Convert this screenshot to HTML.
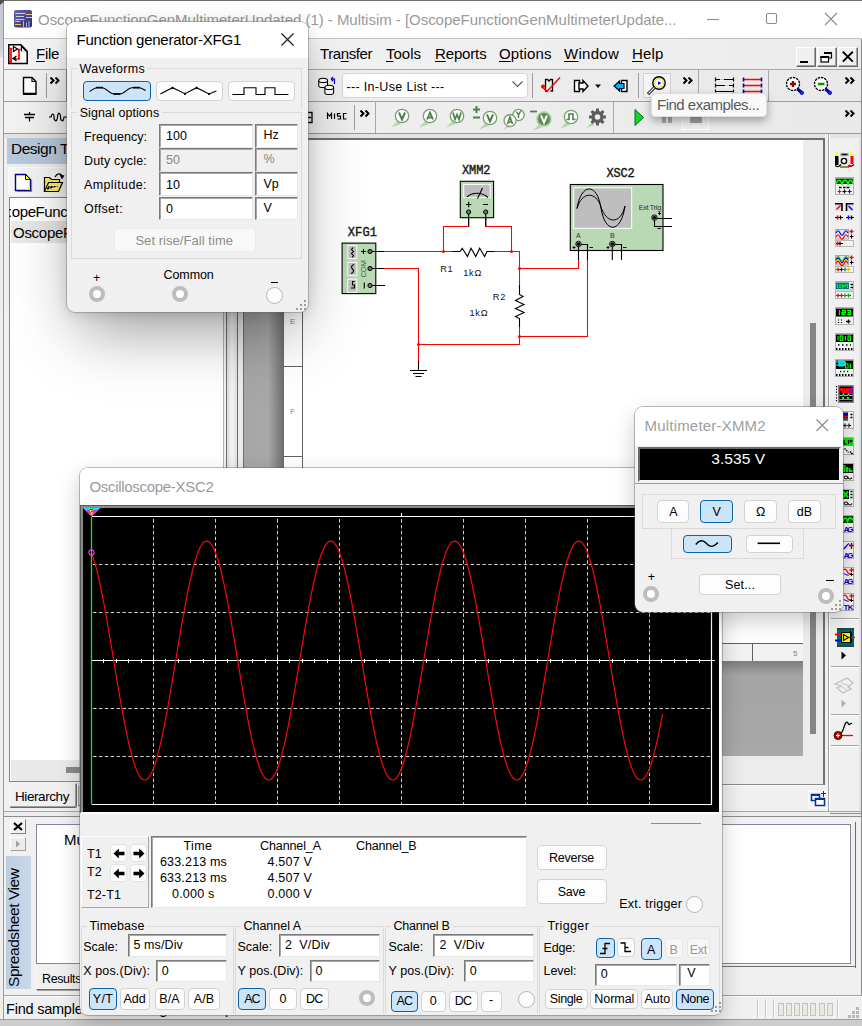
<!DOCTYPE html>
<html><head><meta charset="utf-8"><title>Multisim</title>
<style>
*{box-sizing:border-box;margin:0;padding:0}
html,body{width:862px;height:1026px;overflow:hidden;background:#f0f0f0}
body{font-family:"Liberation Sans",sans-serif;color:#000;position:relative}
.a{position:absolute}
.t{position:absolute;white-space:pre;line-height:1}
u{text-decoration:underline;text-underline-offset:1.5px;text-decoration-thickness:1px}
.sunk{position:absolute;background:#fff;border:1px solid;border-color:#7a7a7a #e8e8e8 #e8e8e8 #7a7a7a;box-shadow:inset 1px 1px 0 #a8a8a8}
.btn{position:absolute;background:#fdfdfd;border:1px solid #d2d2d2;border-radius:4px}
.btn.on{background:#cce4f7;border-color:#0a64ad}
.win{position:absolute;background:#f0f0f0;border-radius:8px;box-shadow:0 0 0 1px rgba(100,100,100,.38),0 30px 60px -12px rgba(0,0,0,.40),0 2px 14px rgba(0,0,0,.13)}
.wint{position:absolute;left:0;top:0;right:0;background:#fff;border-radius:8px 8px 0 0}
.grp{position:absolute;border:1px solid #dadada}
.win.ina{box-shadow:0 0 0 1px rgba(100,100,100,.42),0 8px 22px 0 rgba(0,0,0,.22)}

</style></head><body>
<div class="a" style="left:0px;top:0px;width:4px;height:1026px;background:#eeeeee;"></div>
<div class="a" style="left:0px;top:0px;width:4px;height:57px;background:linear-gradient(180deg,#c4c8d1 0,#c9cdd6 80%,#dcdfe4 100%);"></div>
<div class="a" style="left:3px;top:1px;width:1px;height:1025px;background:#9a9a9a;"></div>
<div class="a" style="left:0px;top:0px;width:862px;height:1px;background:#707070;"></div>
<svg class="a" style="left:0;top:0" width="5" height="6" viewBox="0 0 5 6"><path d="M0 0H4.500V1.200L0 5Z" fill="#505050"/></svg>
<div class="a" style="left:4px;top:1px;width:858px;height:37px;background:#fff;"></div>
<div class="a" style="left:4px;top:38px;width:858px;height:1px;background:#c4c4c4;"></div>
<svg class="a" style="left:13px;top:9px" width="20" height="20" viewBox="0 0 20 20"><defs><linearGradient id="ai" x1="0" y1="0" x2="1" y2="1"><stop offset="0" stop-color="#6a68a8"/><stop offset="1" stop-color="#2c2a70"/></linearGradient></defs><rect x="1" y="1" width="18" height="17.5" rx="2" fill="url(#ai)"/><g stroke="#cfcfe6" stroke-width="1"><path d="M2.5 4.5h10M3 7.5h8M2.5 10.5h9"/><path d="M10.5 18v-6M13.5 18v-4.5M16 18v-6" stroke="#b4b4d4"/></g><g stroke="#f0c860" stroke-width="1.2"><path d="M13 5.5h6M13 8.5h6M2 12.5h5M2 15.5h6"/></g></svg>
<div class="t" style="left:38.0px;top:12.0px;font-size:15px;letter-spacing:-0.03px;color:#9a9a9a;">OscopeFunctionGenMultimeterUpdated (1) - Multisim - [OscopeFunctionGenMultimeterUpdate...</div>
<svg class="a" style="left:700px;top:5px" width="150" height="28" viewBox="0 0 150 28"><g stroke="#8c8c8c" stroke-width="1.1" fill="none"><path d="M7 14.5h12"/><rect x="66.5" y="8.5" width="10" height="10" rx="1.5"/><path d="M125 8l12 12M137 8l-12 12"/></g></svg>
<div class="a" style="left:4px;top:39px;width:858px;height:30px;background:linear-gradient(90deg,#f4f4f4,#ececec);"></div>
<svg class="a" style="left:7px;top:43px" width="22" height="22" viewBox="0 0 22 22"><path d="M1.800 1.800h12l6.400 6.400V20.400H1.800z" fill="#fff" stroke="#000" stroke-width="1.500"/><path d="M13.800 1.800v6.400h6.400z" fill="#000"/><path d="M15 4.800l3.400 3.400H15z" fill="#fff"/><path d="M2.500 5.500h3M4 5.500v13M10.500 6.500h3M12 6.500v9.500H9" stroke="#f00" stroke-width="1.700" fill="none"/><rect x="2.500" y="17" width="2.500" height="3" fill="#f00"/><path d="M6.500 3.500l4 2.500-4 2.500z" fill="#fff" stroke="#000" stroke-width="1.200"/><path d="M9.500 13l-3.500 2.500 3.500 2.500M6 15.500h3" fill="none" stroke="#000" stroke-width="1.300"/></svg>
<div class="t" style="left:36.0px;top:46.4px;font-size:15px;letter-spacing:-0.29px;color:#000;"><u>F</u>ile</div>
<div class="t" style="left:320.0px;top:46.4px;font-size:15px;letter-spacing:-0.41px;color:#000;">Tra<u>n</u>sfer</div>
<div class="t" style="left:386.0px;top:46.4px;font-size:15px;letter-spacing:-0.00px;color:#000;"><u>T</u>ools</div>
<div class="t" style="left:435.0px;top:46.4px;font-size:15px;letter-spacing:-0.15px;color:#000;"><u>R</u>eports</div>
<div class="t" style="left:499.0px;top:46.4px;font-size:15px;letter-spacing:0.12px;color:#000;"><u>O</u>ptions</div>
<div class="t" style="left:564.0px;top:46.4px;font-size:15px;letter-spacing:0.27px;color:#000;"><u>W</u>indow</div>
<div class="t" style="left:632.0px;top:46.4px;font-size:15px;letter-spacing:0.16px;color:#000;"><u>H</u>elp</div>
<div class="a" style="left:796px;top:47px;width:20px;height:20px;background:#f0f0f0;border:1px solid;border-color:#fff #696969 #696969 #fff;box-shadow:inset -1px -1px 0 #a0a0a0"></div>
<div class="a" style="left:817px;top:47px;width:20px;height:20px;background:#f0f0f0;border:1px solid;border-color:#fff #696969 #696969 #fff;box-shadow:inset -1px -1px 0 #a0a0a0"></div>
<div class="a" style="left:838px;top:47px;width:20px;height:20px;background:#f0f0f0;border:1px solid;border-color:#fff #696969 #696969 #fff;box-shadow:inset -1px -1px 0 #a0a0a0"></div>
<svg class="a" style="left:796px;top:47px" width="62" height="20" viewBox="796 47 62 20"><g stroke="#000" fill="none"><path d="M800 62H808" stroke-width="2"/><path d="M824.500 53.500h7v4.500h-2.500" stroke-width="1.200"/><path d="M824 53h8" stroke-width="2"/><rect x="821" y="57" width="7.500" height="5" fill="#fff" stroke-width="1.200"/><path d="M820.400 57h8.700" stroke-width="2"/><path d="M842.800 51.800l10 9.800M852.800 51.800l-10 9.800" stroke-width="1.900"/></g></svg>
<div class="a" style="left:4px;top:69px;width:858px;height:1px;background:#a8a8a8;"></div>
<div class="a" style="left:4px;top:70px;width:858px;height:31px;background:linear-gradient(90deg,#f2f2f2,#e9e9e9);"></div>
<div class="a" style="left:4px;top:101px;width:858px;height:1px;background:#a0a0a0;"></div>
<div class="a" style="left:4px;top:102px;width:858px;height:31px;background:linear-gradient(90deg,#f2f2f2,#e9e9e9);"></div>
<div class="a" style="left:4px;top:133px;width:858px;height:1px;background:#9a9a9a;"></div>
<div class="a" style="left:4px;top:134px;width:858px;height:4px;background:#e4e4e4;"></div>
<div class="a" style="left:228px;top:138px;width:596px;height:2px;background:#707070;"></div>
<svg class="a" style="left:22px;top:76px" width="16" height="20" viewBox="0 0 16 20"><path d="M1.500 1.500h8.500l4 4V17.500H1.500z" fill="#fff" stroke="#000" stroke-width="1.4"/><path d="M1 18h13.500" stroke="#000" stroke-width="2"/><path d="M10 1.500v4h4" fill="none" stroke="#000" stroke-width="1.2"/></svg>
<div class="a" style="left:46px;top:73px;width:1px;height:25px;background:#9c9c9c;"></div>
<div class="a" style="left:66px;top:70px;width:2px;height:31px;background:#8c8c8c;"></div>
<svg class="a" style="left:50px;top:77px" width="11" height="8" viewBox="0 0 11 8"><path d="M0.500 0.500L3.500 3.500 0.500 6.500M5.500 0.500L8.500 3.500 5.500 6.500" stroke="#000" stroke-width="2" fill="none"/></svg>
<svg class="a" style="left:22px;top:110px" width="46" height="14" viewBox="0 0 46 14"><g stroke="#000" fill="none"><path d="M2 4.500h11M3 7.500h9" stroke-width="1.4"/><path d="M7.500 2v3M7.500 7.500v4" stroke-width="1.2"/><path d="M27 7h2c1-4 3-4 3 0s3 6 3.500 0 3-4 3 0 3 6 3.500 0h3" stroke-width="1.2"/></g></svg>
<svg class="a" style="left:317px;top:75.500px" width="21" height="21" viewBox="0 0 24 24"><g fill="#fff" stroke="#000" stroke-width="1.2"><path d="M2 5v6c0 3 10 3 10 0V5"/><ellipse cx="7" cy="5" rx="5" ry="2.500"/><path d="M9 13v6c0 3 10 3 10 0v-6"/><ellipse cx="14" cy="13" rx="5" ry="2.500"/></g><path d="M20 9V3.500h-3.500M16 3.500l2.500-2.500M16 3.500l2.500 2.500" stroke="#00c" stroke-width="1.3" fill="none"/></svg>
<div class="a" style="left:342px;top:73px;width:186px;height:25px;background:#fff;border:1px solid #d6d6d6;border-radius:4px"></div>
<div class="t" style="left:346.5px;top:80.5px;font-size:12.5px;letter-spacing:0.33px;">--- In-Use List ---</div>
<svg class="a" style="left:511px;top:80px" width="13" height="9" viewBox="0 0 13 9"><path d="M1.500 1.500l5 5 5-5" stroke="#555" stroke-width="1.1" fill="none"/></svg>
<div class="a" style="left:532px;top:73px;width:1px;height:25px;background:#9c9c9c;"></div>
<svg class="a" style="left:540px;top:76px" width="22" height="20" viewBox="0 0 22 20"><path d="M5.500 3v12h2M12.500 3v12h-2M5.500 3.500h2l1.500 1.500 1.500-1.500h2" stroke="#000" stroke-width="1.3" fill="none"/><path d="M2 10.500l5 5L20 1.500" stroke="#f00" stroke-width="1.5" fill="none"/><circle cx="3" cy="10.500" r="2" fill="#f00"/></svg>
<svg class="a" style="left:573px;top:78px" width="32" height="16" viewBox="0 0 32 16"><path d="M1.500 2.500h5v11h-5z" fill="#fff" stroke="#000" stroke-width="1.4"/><path d="M6 5h4V2.500l5 5.500-5 5.500V11H6z" fill="#fff" stroke="#000" stroke-width="1.4"/><path d="M22 6.500h6l-3 3.500z" fill="#000"/></svg>
<svg class="a" style="left:612px;top:78px" width="18" height="16" viewBox="0 0 18 16"><path d="M9.500 2.500h5.500v11h-5.500z" fill="#fff" stroke="#000" stroke-width="1.4"/><path d="M12 5.500H7.500V3L2 8l5.500 5V10.500H12z" fill="#00b4e6" stroke="#003" stroke-width="1.2"/></svg>
<div class="a" style="left:638px;top:73px;width:1px;height:25px;background:#9c9c9c;"></div>
<div class="a" style="left:643px;top:73px;width:28px;height:25px;border:1px solid #d0d0d0;background:#f4f4f4"></div>
<svg class="a" style="left:645px;top:75px" width="24" height="22" viewBox="0 0 24 22"><circle cx="14" cy="8" r="6.200" fill="#fffbe0" stroke="#000" stroke-width="1.4"/><circle cx="14" cy="8" r="4.400" fill="none" stroke="#e8d84a" stroke-width="1.2"/><path d="M13 6.500l3.500 1.500-3.500 2z" fill="#00f"/><path d="M9.500 12.500L3 19" stroke="#000" stroke-width="3"/><path d="M9.500 12.500L3.500 18.500" stroke="#e8e8e8" stroke-width="1.200"/></svg>
<svg class="a" style="left:683px;top:77px" width="11" height="8" viewBox="0 0 11 8"><path d="M0.500 0.500L3.500 3.500 0.500 6.500M5.500 0.500L8.500 3.500 5.500 6.500" stroke="#000" stroke-width="2" fill="none"/></svg>
<div class="a" style="left:698px;top:70px;width:1px;height:31px;background:#a8a8a8;"></div>
<svg class="a" style="left:714px;top:76px" width="50" height="18" viewBox="0 0 50 18"><g stroke="#000" stroke-width="1.200" fill="none"><path d="M1 3.500h19M1 9.500h19M1 15.500h19M1.500 1.500v4M19.500 1.500v4M1.500 7.500v4M19.500 7.500v4M1.500 13.500v3M19.500 13.500v3"/><path d="M7 2v3M9 2v3M12 8v3M14 8v3" stroke="#fff" stroke-width="1.500"/></g><g stroke="#f00" stroke-width="1.400"><path d="M30 3.500h17M30 9.500h17M30 15.500h17"/></g><g stroke="#00c" stroke-width="1.600"><path d="M29.500 1.500v4M47.500 1.500v4M29.500 7.500v4M47.500 7.500v4M29.500 13.500v3.500M47.500 13.500v3.500"/></g></svg>
<div class="a" style="left:768px;top:70px;width:1px;height:31px;background:#a8a8a8;"></div>
<svg class="a" style="left:783.5px;top:75.600px" width="22" height="22" viewBox="0 0 22 22"><circle cx="9" cy="8" r="6.500" fill="#fff" stroke="#000" stroke-width="1.300" stroke-dasharray="2.500 0.800"/><path d="M9 5v6M6 8h6" stroke="#900" stroke-width="2.400"/><path d="M13.500 13l4 3.500" stroke="#009" stroke-width="3"/><circle cx="17.800" cy="16.800" r="1.700" fill="#33f" stroke="#009"/></svg>
<svg class="a" style="left:811.5px;top:75.600px" width="22" height="22" viewBox="0 0 22 22"><circle cx="9" cy="8" r="6.500" fill="#fff" stroke="#000" stroke-width="1.300" stroke-dasharray="2.500 0.800"/><path d="M6 8h6.500" stroke="#090" stroke-width="2.600"/><path d="M13.500 13l4 3.500" stroke="#009" stroke-width="3"/><circle cx="17.800" cy="16.800" r="1.700" fill="#33f" stroke="#009"/></svg>
<svg class="a" style="left:845px;top:77px" width="11" height="8" viewBox="0 0 11 8"><path d="M0.500 0.500L3.500 3.500 0.500 6.500M5.500 0.500L8.500 3.500 5.500 6.500" stroke="#000" stroke-width="2" fill="none"/></svg>
<svg class="a" style="left:845px;top:110px" width="11" height="8" viewBox="0 0 11 8"><path d="M0.500 0.500L3.500 3.500 0.500 6.500M5.500 0.500L8.500 3.500 5.500 6.500" stroke="#000" stroke-width="2" fill="none"/></svg>
<svg class="a" style="left:307px;top:108px" width="44" height="18" viewBox="0 0 44 18"><path d="M0 4.500h5v10H0M1 9.500h3" stroke="#000" stroke-width="1.300" fill="none"/><g stroke="#000" stroke-width="1.200" fill="none"><path d="M20.500 11V5.500l2 2.500 2-2.500V11"/><path d="M27.500 5.500V11"/><path d="M33.500 5.500h-3v2.700h3v2.800h-3"/><path d="M39.500 5.500h-3V11h3"/></g></svg>
<div class="a" style="left:354px;top:105px;width:1px;height:25px;background:#9c9c9c;"></div>
<svg class="a" style="left:360px;top:110px" width="11" height="8" viewBox="0 0 11 8"><path d="M0.500 0.500L3.500 3.500 0.500 6.500M5.500 0.500L8.500 3.500 5.500 6.500" stroke="#000" stroke-width="2" fill="none"/></svg>
<div class="a" style="left:375px;top:102px;width:1px;height:31px;background:#a8a8a8;"></div>
<svg class="a" style="left:386px;top:105px" width="30" height="24" viewBox="0 0 30 24" overflow="visible"><path d="M5 22.500l7-7 3 3.500z" fill="#b8d6aa"/><circle cx="16" cy="11" r="6.7" fill="#fff" stroke="#7aa070" stroke-width="1.300"/><path d="M13 7.500l3 7 3-7" stroke="#4f7f4f" stroke-width="2" fill="none"/></svg>
<svg class="a" style="left:414px;top:105px" width="30" height="24" viewBox="0 0 30 24" overflow="visible"><path d="M5 22.500l7-7 3 3.500z" fill="#b8d6aa"/><circle cx="16" cy="11" r="6.7" fill="#fff" stroke="#7aa070" stroke-width="1.300"/><path d="M13 14.500l3-7 3 7M14 12.500h4" stroke="#4f7f4f" stroke-width="1.800" fill="none"/></svg>
<svg class="a" style="left:441px;top:105px" width="30" height="24" viewBox="0 0 30 24" overflow="visible"><path d="M5 22.500l7-7 3 3.500z" fill="#b8d6aa"/><circle cx="16" cy="11" r="6.7" fill="#fff" stroke="#7aa070" stroke-width="1.300"/><path d="M12 7.500l2 7 2-5 2 5 2-7" stroke="#4f7f4f" stroke-width="1.700" fill="none"/></svg>
<svg class="a" style="left:474px;top:107px" width="30" height="24" viewBox="0 0 30 24" overflow="visible"><path d="M5 22.500l7-7 3 3.500z" fill="#b8d6aa"/><circle cx="16" cy="11" r="6.7" fill="#fff" stroke="#7aa070" stroke-width="1.300"/><path d="M13 7.500l3 7 3-7" stroke="#4f7f4f" stroke-width="2" fill="none"/><path d="M-1 2.500h7M2.500 -1v7M-1 10.500h7" stroke="#4f7f4f" stroke-width="2"/></svg>
<svg class="a" style="left:498px;top:106.5px" width="30" height="24" viewBox="0 0 30 24" overflow="visible"><path d="M5 22.500l7-7 3 3.500z" fill="#b8d6aa"/><circle cx="20.500" cy="8" r="5.600" fill="#fff" stroke="#7aa070" stroke-width="1.300"/><path d="M18.500 4.500l2 3.500 2.500-4.500M20.500 8v3" stroke="#4f7f4f" stroke-width="1.500" fill="none"/><circle cx="12" cy="13.500" r="6" fill="#fff" stroke="#7aa070" stroke-width="1.300"/><path d="M9.500 17l2.500-7 2.500 7M10.300 15h3.400" stroke="#4f7f4f" stroke-width="1.600" fill="none"/></svg>
<svg class="a" style="left:528px;top:107.5px" width="30" height="24" viewBox="0 0 30 24" overflow="visible"><path d="M5 22.500l7-7 3 3.500z" fill="#b8d6aa"/><circle cx="16" cy="11" r="6.2" fill="#5a8a54" stroke="#7aa070" stroke-width="1.300"/><circle cx="16" cy="11" r="7.300" fill="none" stroke="#b8d6aa" stroke-width="1.200"/><path d="M13 7.500l3 7 3-7" stroke="#fff" stroke-width="2" fill="none"/><path d="M2 3.500h7" stroke="#4f7f4f" stroke-width="1.800"/></svg>
<svg class="a" style="left:555px;top:105.5px" width="30" height="24" viewBox="0 0 30 24" overflow="visible"><path d="M5 22.500l7-7 3 3.500z" fill="#b8d6aa"/><circle cx="16" cy="11" r="6.7" fill="#fff" stroke="#7aa070" stroke-width="1.300"/><path d="M11.500 13.500h2.500v-5.500h4v5.500h2.500" stroke="#4f7f4f" stroke-width="1.600" fill="none"/></svg>
<svg class="a" style="left:583px;top:106px" width="26" height="24" viewBox="0 0 26 24"><path d="M3 22l6-6 3 3z" fill="#b8d6aa"/><g transform="translate(14.500,11)"><path d="M8.48,-1.45 L8.48,1.45 L5.99,1.59 L5.36,3.11 L7.02,4.96 L4.96,7.02 L3.11,5.36 L1.59,5.99 L1.45,8.48 L-1.45,8.48 L-1.59,5.99 L-3.11,5.36 L-4.96,7.02 L-7.02,4.96 L-5.36,3.11 L-5.99,1.59 L-8.48,1.45 L-8.48,-1.45 L-5.99,-1.59 L-5.36,-3.11 L-7.02,-4.96 L-4.96,-7.02 L-3.11,-5.36 L-1.59,-5.99 L-1.45,-8.48 L1.45,-8.48 L1.59,-5.99 L3.11,-5.36 L4.96,-7.02 L7.02,-4.96 L5.36,-3.11 L5.99,-1.59Z" fill="#5c5c5c"/><circle r="2.800" fill="#ececec"/></g></svg>
<div class="a" style="left:613px;top:102px;width:1px;height:31px;background:#a8a8a8;"></div>
<svg class="a" style="left:633px;top:108px" width="12" height="19" viewBox="0 0 12 19"><path d="M2 1.500v16l8.500-8z" fill="#1ed41e" stroke="#063" stroke-width="1"/></svg>
<div class="a" style="left:662px;top:112px;width:4px;height:11px;background:#a8a8a8;"></div>
<div class="a" style="left:668px;top:112px;width:4px;height:11px;background:#a8a8a8;"></div>
<div class="a" style="left:682px;top:104px;width:27px;height:26px;border:1px solid #fafafa;background:#eee"></div>
<div class="a" style="left:690px;top:112px;width:12px;height:11px;background:#a0a0a0;"></div>
<div class="a" style="left:4px;top:140px;width:224px;height:672px;background:#f0f0f0;"></div>
<div class="a" style="left:7px;top:138px;width:216px;height:26px;background:#b9c9dc;"></div>
<div class="t" style="left:11.0px;top:141.4px;font-size:15.5px;letter-spacing:-0.48px;">Design Toolbox</div>
<div class="a" style="left:8px;top:167px;width:214px;height:28px;background:linear-gradient(90deg,#f6f6f6,#e6e6e6);border:1px solid #fafafa;"></div>
<svg class="a" style="left:14px;top:173px" width="20" height="20" viewBox="0 0 20 20"><path d="M1.500 1.500h10l5 5v11h-15z" fill="#fff" stroke="#00008b" stroke-width="1.400"/><path d="M11.500 1.500v5h5z" fill="#ff0" stroke="#00008b" stroke-width="1"/><path d="M17.500 7v11.500H3" stroke="#888" stroke-width="1.200" fill="none"/><path d="M12 17l4-4v4z" fill="#ff0"/></svg>
<svg class="a" style="left:43px;top:172px" width="24" height="22" viewBox="0 0 24 22"><path d="M1.500 19.500v-14h5l2 2h8v3" fill="#ffee58" stroke="#000" stroke-width="1.200"/><path d="M1.500 19.500l4-9h14l-4 9z" fill="#ffee58" stroke="#000" stroke-width="1.200"/><path d="M3 18l2-4h11M6 16h9" stroke="#fff" stroke-width="1" stroke-dasharray="1.500 1.500"/><path d="M12 5c2-4 6-4 7-1" stroke="#000" stroke-width="1.300" fill="none"/><path d="M16.500 2.500l5 1-2.500 4z" fill="#000"/></svg>
<div class="a" style="left:9px;top:197px;width:215px;height:585px;background:#fff;border:1px solid #808896"></div>
<div class="a" style="left:11px;top:221px;width:212px;height:22px;background:linear-gradient(90deg,#e9e9e9,#d8d8d8);"></div>
<div class="t" style="left:8.0px;top:204.3px;font-size:15px;letter-spacing:-0.40px;">:opeFunctionGenMultimeter</div>
<div class="t" style="left:13.0px;top:225.3px;font-size:15px;letter-spacing:-0.28px;">OscopeFunctionGenMult</div>
<div class="a" style="left:11px;top:760px;width:212px;height:21px;background:#e9e9e9;"></div>
<div class="a" style="left:66px;top:767px;width:60px;height:6px;background:#8a8a8a;"></div>
<div class="a" style="left:9px;top:783px;width:67.500px;height:24.500px;background:#f0f0f0;border:1px solid;border-color:transparent #696969 #696969 #f8f8f8;border-radius:0 0 2px 2px;box-shadow:inset -1px -1px 0 #a0a0a0"></div>
<div class="t" style="left:15.0px;top:790.1px;font-size:13.5px;letter-spacing:-0.42px;">Hierarchy</div>
<div class="a" style="left:78px;top:785px;width:60px;height:21px;background:#f0f0f0;border:1px solid;border-color:#f8f8f8 #696969 #696969 #a0a0a0"></div>
<div class="a" style="left:223px;top:140px;width:1px;height:672px;background:#b4b4b4;"></div>
<div class="a" style="left:226px;top:140px;width:1px;height:672px;background:#6e6e6e;"></div>
<div class="a" style="left:227px;top:140px;width:10px;height:672px;background:linear-gradient(90deg,#dcdcdc,#f4f4f4 50%,#e0e0e0);"></div>
<div class="a" style="left:237px;top:140px;width:1px;height:672px;background:#6e6e6e;"></div>
<div class="a" style="left:238px;top:140px;width:5px;height:672px;background:#ececec;"></div>
<div class="a" style="left:243px;top:140px;width:1px;height:672px;background:#707070;"></div>
<div class="a" style="left:244px;top:140px;width:40px;height:644px;background:linear-gradient(90deg,#a6a6a6 0%,#a8a8a8 60%,#6c6c6c 100%);"></div>
<div class="a" style="left:284px;top:140px;width:19px;height:520px;background:#fff;"></div>
<div class="a" style="left:302px;top:140px;width:1px;height:520px;background:#606060;"></div>
<div class="a" style="left:303px;top:140px;width:500px;height:504px;background:#fff;"></div>
<div class="a" style="left:284px;top:276px;width:18px;height:1px;background:#606060;"></div>
<div class="a" style="left:284px;top:366px;width:18px;height:1px;background:#606060;"></div>
<div class="a" style="left:284px;top:456px;width:18px;height:1px;background:#606060;"></div>
<div class="a" style="left:284px;top:546px;width:18px;height:1px;background:#606060;"></div>
<div class="t" style="left:290.0px;top:318.2px;font-size:8px;color:#808080;">E</div>
<div class="t" style="left:290.0px;top:407.7px;font-size:8px;color:#808080;">F</div>
<div class="a" style="left:303px;top:643px;width:500px;height:1px;background:#606060;"></div>
<div class="a" style="left:303px;top:644px;width:500px;height:17px;background:#f2f2f2;"></div>
<div class="a" style="left:752px;top:644px;width:1px;height:17px;background:#606060;"></div>
<div class="t" style="left:793.0px;top:649.7px;font-size:8px;color:#808080;">5</div>
<div class="a" style="left:284px;top:661px;width:519px;height:95px;background:linear-gradient(180deg,#7c7c7c 0,#a4a4a4 14px,#a8a8a8 100%);"></div>
<div class="a" style="left:244px;top:756px;width:559px;height:28px;background:#ececec;"></div>
<div class="a" style="left:803px;top:140px;width:21px;height:644px;background:#ececec;"></div>
<div class="a" style="left:810px;top:323px;width:6px;height:411px;background:#868686;"></div>
<div class="a" style="left:823px;top:138px;width:1.5px;height:647px;background:#707070;"></div>
<div class="a" style="left:824.5px;top:134px;width:3.5px;height:682px;background:#f0f0f0;"></div>
<div class="a" style="left:228px;top:784px;width:596px;height:1px;background:#8a8a8a;"></div>
<div class="a" style="left:228px;top:785px;width:596px;height:1px;background:#fafafa;"></div>
<svg class="a" style="left:808px;top:790px" width="20" height="19" viewBox="0 0 20 19"><rect x="0" y="1" width="19" height="17" fill="#f4f4f4" stroke="#fff"/><g fill="#fff" stroke="#00339a" stroke-width="1.500"><rect x="3.500" y="4.500" width="8" height="6"/><rect x="7.500" y="8.500" width="9" height="7"/></g><path d="M3 5h9M7 9h10" stroke="#00339a" stroke-width="2.200"/><path d="M15.500 1v6M13 3.500h5" stroke="#00339a" stroke-width="1"/></svg>
<div class="a" style="left:828px;top:140px;width:34px;height:676px;background:#f0f0f0;"></div>
<div class="a" style="left:828px;top:134px;width:1px;height:682px;background:#a4a4a4;"></div>
<div class="a" style="left:829px;top:134px;width:1px;height:682px;background:#fbfbfb;"></div>
<div class="a" style="left:859px;top:140px;width:2px;height:676px;background:#e2e2e2;"></div>
<div class="a" style="left:4px;top:811px;width:858px;height:1px;background:#a6a6a6;"></div>
<div class="a" style="left:4px;top:812px;width:858px;height:4px;background:#ececec;"></div>
<div class="a" style="left:4px;top:816px;width:858px;height:1px;background:#8c8c8c;"></div>
<div class="a" style="left:830px;top:813px;width:32px;height:1px;background:#909090;"></div>
<div class="a" style="left:10px;top:819px;width:16px;height:15px;background:#f4f4f4;border:1px solid;border-color:#fff #808080 #808080 #fff"></div>
<svg class="a" style="left:13px;top:822px" width="10" height="9" viewBox="0 0 10 9"><path d="M1 1l8 7M9 1l-8 7" stroke="#000" stroke-width="2.200"/></svg>
<div class="a" style="left:10px;top:837px;width:16px;height:14px;background:#ececec;border:1px solid;border-color:#fff #a0a0a0 #a0a0a0 #fff"></div>
<svg class="a" style="left:15px;top:840px" width="6" height="8" viewBox="0 0 6 8"><path d="M1 0.500l4 3.500-4 3.500z" fill="#a0a0a0"/></svg>
<div class="a" style="left:6px;top:856px;width:25px;height:133px;background:linear-gradient(90deg,#bccde2,#cad8e9);"></div>
<div class="t" style="left:6.200px;top:986.500px;font-size:15.5px;letter-spacing:-0.44px;transform-origin:0 0;transform:rotate(-90deg)">Spreadsheet View</div>
<div class="a" style="left:36px;top:824px;width:815px;height:140px;background:#fff;border:1px solid #808896"></div>
<div class="a" style="left:854.5px;top:822px;width:1.5px;height:145.5px;background:#6e6e6e;"></div>
<div class="a" style="left:36px;top:965.5px;width:820px;height:1.5px;background:#6e6e6e;"></div>
<div class="a" style="left:861px;top:39px;width:1px;height:980px;background:#8a8a8a;"></div>
<div class="t" style="left:64.0px;top:831.8px;font-size:15px;letter-spacing:0.08px;">Mu</div>
<div class="a" style="left:36px;top:965px;width:60px;height:25px;background:#f0f0f0;border:1px solid;border-color:#f0f0f0 #696969 #696969 #f8f8f8;box-shadow:1px 1px 0 #a0a0a0"></div>
<div class="t" style="left:42.0px;top:973.2px;font-size:12.5px;letter-spacing:-0.38px;">Results</div>
<div class="a" style="left:4px;top:995px;width:858px;height:1px;background:#a4a4a4;"></div>
<div class="a" style="left:4px;top:996px;width:858px;height:1px;background:#fbfbfb;"></div>
<div class="a" style="left:4px;top:997px;width:858px;height:22px;background:#f0f0f0;"></div>
<div class="t" style="left:6.0px;top:1002.1px;font-size:14.5px;letter-spacing:-0.22px;">Find sample circuits using an example.</div>
<div class="a" style="left:757px;top:999px;width:1px;height:19px;background:#c6c6c6;"></div>
<div class="a" style="left:758px;top:999px;width:1px;height:19px;background:#fbfbfb;"></div>
<div class="a" style="left:765px;top:999px;width:1px;height:19px;background:#c6c6c6;"></div>
<div class="a" style="left:766px;top:999px;width:1px;height:19px;background:#fbfbfb;"></div>
<div class="a" style="left:773px;top:999px;width:1px;height:19px;background:#c6c6c6;"></div>
<div class="a" style="left:774px;top:999px;width:1px;height:19px;background:#fbfbfb;"></div>
<div class="a" style="left:837px;top:999px;width:1px;height:19px;background:#c6c6c6;"></div>
<div class="a" style="left:838px;top:999px;width:1px;height:19px;background:#fbfbfb;"></div>
<div class="a" style="left:778.0px;top:1003px;width:6px;height:13px;background:#e9e9df;border:1px solid #c4c4c4"></div>
<div class="a" style="left:786.1px;top:1003px;width:6px;height:13px;background:#e9e9df;border:1px solid #c4c4c4"></div>
<div class="a" style="left:794.2px;top:1003px;width:6px;height:13px;background:#e9e9df;border:1px solid #c4c4c4"></div>
<div class="a" style="left:802.3px;top:1003px;width:6px;height:13px;background:#e9e9df;border:1px solid #c4c4c4"></div>
<div class="a" style="left:810.4px;top:1003px;width:6px;height:13px;background:#e9e9df;border:1px solid #c4c4c4"></div>
<div class="a" style="left:818.5px;top:1003px;width:6px;height:13px;background:#e9e9df;border:1px solid #c4c4c4"></div>
<div class="a" style="left:826.6px;top:1003px;width:6px;height:13px;background:#e9e9df;border:1px solid #c4c4c4"></div>
<svg class="a" style="left:847px;top:1006px" width="13" height="13" viewBox="0 0 13 13"><g fill="#b8b8b8"><rect x="9" y="1" width="3" height="3"/><rect x="5" y="5" width="3" height="3"/><rect x="9" y="5" width="3" height="3"/><rect x="1" y="9" width="3" height="3"/><rect x="5" y="9" width="3" height="3"/><rect x="9" y="9" width="3" height="3"/></g></svg>
<div class="a" style="left:0px;top:1019px;width:862px;height:1px;background:#9c9c9c;"></div>
<div class="a" style="left:0px;top:1020px;width:862px;height:6px;background:#cdcdcd;"></div>
<svg class="a" style="left:834.500px;top:150.5px" width="20" height="19" viewBox="0 0 20 19"><rect x="1" y="0" width="2" height="5" fill="#ff0"/><rect x="0" y="5" width="3.500" height="9" fill="#000"/><rect x="15" y="0" width="1.500" height="5" fill="#ff0"/><rect x="15.500" y="5" width="3" height="8" fill="#f00"/><rect x="5" y="1" width="9.500" height="16" fill="#e8e8e8"/><rect x="5.500" y="2" width="8" height="3" fill="#0cf"/><rect x="7" y="3" width="5" height="1" fill="#000"/><circle cx="9" cy="10" r="2.600" fill="#fff" stroke="#000" stroke-width="1.400"/><path d="M0 14.500c3 2 4 1 6-1M14 14c2 2 3 1 5-.5" stroke="#000" stroke-width="1.300" fill="none"/><rect x="5" y="15" width="9" height="2" fill="#885"/><rect x="13" y="14" width="4" height="2" fill="#f00"/></svg>
<svg class="a" style="left:834.500px;top:176.5px" width="20" height="19" viewBox="0 0 20 19"><rect x="0.500" y="0.500" width="18" height="17" fill="#f4f4f4" stroke="#b0b0b0"/><rect x="1" y="1.500" width="17" height="5.500" fill="#083808"/><path d="M1 7c1.500-5 4.500-5 6 0 1.500-5 4.500-5 6 0 1.500-5 4-5 5 0" stroke="#0f0" stroke-width="1.500" fill="none"/><path d="M4 10.500h2.500M8 10.500h2.500M11.500 10.500h3" stroke="#000" stroke-width="1.400"/><path d="M4.5 12.5v4M2.5 14.5h4" stroke="#f00" stroke-width="1.200"/><path d="M9.5 12.5v4M7.5 14.5h4" stroke="#000" stroke-width="1.200"/><path d="M14.5 12.5v4M12.5 14.5h4" stroke="#00f" stroke-width="1.200"/></svg>
<svg class="a" style="left:834.500px;top:202.5px" width="20" height="19" viewBox="0 0 20 19"><rect x="0" y="0" width="7.500" height="8" fill="#e0e0e0"/><path d="M0 0.800h7.500M7 0v8" stroke="#000" stroke-width="1.600"/><path d="M1.500 6.500l4-4" stroke="#f00" stroke-width="1.500"/><rect x="11" y="0" width="7.500" height="8" fill="#e0e0e0"/><path d="M11 0.800h7.500M11.500 0v8" stroke="#000" stroke-width="1.600"/><path d="M13.500 3l4 4" stroke="#00f" stroke-width="1.500"/><rect x="0" y="10.500" width="19" height="7.500" fill="#f2f2f2"/><path d="M0 14.500h8M11 14.500h8" stroke="#000" stroke-width="1.200"/><path d="M2.500 12.500v4" stroke="#f00" stroke-width="1.800"/><path d="M5.500 12.500v4M16.500 12.500v4" stroke="#000" stroke-width="1.300"/><path d="M13.500 12.500v4" stroke="#00f" stroke-width="1.600"/></svg>
<svg class="a" style="left:834.500px;top:228.5px" width="20" height="19" viewBox="0 0 20 19"><rect x="0.500" y="0.500" width="13" height="9.500" fill="#e4e4e4" stroke="#a8a8a8"/><path d="M1 4c1.500-3 2.500-3 4 0s2.500 3 4 0 2.500-3 4 0" stroke="#00f" stroke-width="1.200" fill="none"/><path d="M1 8c1.500-3 2.500-3 4 0s2.500 3 4 0 2.500-3 4 0" stroke="#f00" stroke-width="1.200" fill="none"/><path d="M14.500 2.500h4M16.500 0.500v4" stroke="#f00" stroke-width="1.400"/><path d="M16.500 5.500v4M15 7.500h3.500" stroke="#000" stroke-width="1.100"/><rect x="0.500" y="11.500" width="18" height="6" fill="#f2f2f2" stroke="#b8b8b8"/><path d="M1 14.500h7M5 12.500v4" stroke="#000" stroke-width="1.200"/><path d="M2.500 12.500v4" stroke="#f00" stroke-width="1.800"/></svg>
<svg class="a" style="left:834.500px;top:254.5px" width="20" height="19" viewBox="0 0 20 19"><rect x="0.500" y="0.500" width="13" height="9.500" fill="#e4e4e4" stroke="#a8a8a8"/><path d="M1 4c1.500-3 2.500-3 4 0s2.500 3 4 0 2.500-3 4 0" stroke="#0c0" stroke-width="1.300" fill="none"/><path d="M1 5.500c1.500-3 2.500-3 4 0s2.500 3 4 0 2.500-3 4 0" stroke="#00f" stroke-width="1.300" fill="none"/><path d="M1 7c1.500-3 2.500-3 4 0s2.500 3 4 0 2.500-3 4 0" stroke="#fc0" stroke-width="1.300" fill="none"/><path d="M1 8.500c1.500-3 2.500-3 4 0s2.500 3 4 0 2.500-3 4 0" stroke="#f00" stroke-width="1.300" fill="none"/><path d="M14.500 2.500h4M16.500 0.500v4" stroke="#f00" stroke-width="1.400"/><path d="M16.500 5.500v4M15 7.500h3.500" stroke="#000" stroke-width="1.100"/><rect x="0.500" y="11.500" width="18" height="6" fill="#f2f2f2" stroke="#b8b8b8"/><path d="M1 14.500h14" stroke="#000" stroke-width="1.100"/><path d="M3 12.5v4M1 14.5h4" stroke="#f00" stroke-width="1.200"/><path d="M6.5 12.5v4M4.5 14.5h4" stroke="#00f" stroke-width="1.200"/><path d="M10 12.5v4M8 14.5h4" stroke="#0a0" stroke-width="1.200"/><path d="M13.5 12.5v4M11.5 14.5h4" stroke="#cc0" stroke-width="1.200"/></svg>
<svg class="a" style="left:834.500px;top:280.5px" width="20" height="19" viewBox="0 0 20 19"><rect x="0.500" y="0.500" width="18" height="8.500" fill="#f4f4f4" stroke="#b0b0b0"/><rect x="1" y="1.500" width="13" height="6.500" fill="#077"/><path d="M2.500 3v4M5 3v4M7.500 3v4.500M7.500 5.500c2 0 3-1 3.500-2.500M12.500 3v4" stroke="#0e4" stroke-width="1.200" fill="none"/><path d="M15.500 3.500h2.500M15.500 6.500h2.500" stroke="#000" stroke-width="1.400"/><rect x="0.500" y="10.500" width="18" height="7" fill="#f2f2f2" stroke="#b8b8b8"/><path d="M1 14.500h15" stroke="#000" stroke-width="1.100"/><path d="M3 12.5v4M1 14.5h4" stroke="#f00" stroke-width="1.200"/><path d="M6.5 12.5v4M4.5 14.5h4" stroke="#f00" stroke-width="1.200"/><path d="M10 12.5v4M8 14.5h4" stroke="#0a0" stroke-width="1.200"/><path d="M13.5 12.5v4M11.5 14.5h4" stroke="#0a0" stroke-width="1.200"/></svg>
<svg class="a" style="left:834.500px;top:306.5px" width="20" height="19" viewBox="0 0 20 19"><rect x="0.500" y="0.500" width="18" height="17" fill="#f4f4f4" stroke="#b0b0b0"/><rect x="1" y="1.500" width="17" height="8" fill="#000"/><path d="M4.500 3v5M7 3.500h3.500v2h-3.500v2h3.500M12 3.500h3.500v4h-3.500M12.500 5.500h3" stroke="#0f0" stroke-width="1.300" fill="none"/><path d="M3.500 12.500v1M3.500 15v1M6.500 12.500v1M6.500 15v1M11 14.500h4.500M13.500 12.500v4" stroke="#000" stroke-width="1.300"/></svg>
<svg class="a" style="left:834.500px;top:332.5px" width="20" height="19" viewBox="0 0 20 19"><rect x="0.500" y="0.500" width="18" height="17" fill="#f4f4f4" stroke="#b0b0b0"/><rect x="1" y="1.500" width="17" height="7.500" fill="#000"/><g shape-rendering="auto" stroke="#0f0" stroke-width="1.200" fill="none"><path d="M3 3v4.500M10.500 3v4.500"/><rect x="5.200" y="3" width="2.600" height="4.500"/><rect x="13" y="3" width="2.600" height="4.500"/></g><path d="M3 12h13" stroke="#000" stroke-width="1.600" stroke-dasharray="1.500 2.500"/><path d="M1 16h17" stroke="#000" stroke-width="1.800" stroke-dasharray="1.500 1.500"/></svg>
<svg class="a" style="left:834.500px;top:358.5px" width="20" height="19" viewBox="0 0 20 19"><rect x="0.500" y="0.500" width="18" height="17" fill="#f4f4f4" stroke="#b0b0b0"/><rect x="1" y="1.500" width="17" height="8.500" fill="#000"/><path d="M1 3h3M1 6h3M4 2h3.500c2 0 3 1.500 3 2.500s-1 2.500-3 2.500H4z" stroke="#0ff" stroke-width="1.100" fill="#0cc"/><rect x="10.500" y="5" width="2.500" height="4" fill="none" stroke="#0f0" stroke-width="1.100"/><path d="M15.500 4.500v5" stroke="#0f0" stroke-width="1.300"/><path d="M5 12.500h9" stroke="#000" stroke-width="1.400" stroke-dasharray="1.200 2.300"/><path d="M1 16h17" stroke="#000" stroke-width="1.800" stroke-dasharray="1.500 1.500"/></svg>
<svg class="a" style="left:834.500px;top:384.5px" width="20" height="19" viewBox="0 0 20 19"><rect x="3" y="0" width="16" height="18" fill="#888"/><rect x="4.500" y="1.500" width="13" height="15" fill="#000"/><path d="M1.500 1v16" stroke="#000" stroke-width="1.200" stroke-dasharray="1.200 1.600"/><path d="M4.500 4.500h4v2.500h4v-2.500h5" stroke="#f00" stroke-width="3" fill="none"/><rect x="14" y="3" width="3.500" height="6" fill="#a0a"/><path d="M4.500 10.500h3l1-1.500 1 1.500h3l1-1.500 1 1.500h3" stroke="#0ff" stroke-width="1.200" fill="none"/><path d="M4.500 14.500h3v-2h1v2h4v-2h1v2h4" stroke="#0f0" stroke-width="1.200" fill="none"/></svg>
<svg class="a" style="left:834.500px;top:410.5px" width="20" height="19" viewBox="0 0 20 19"><rect x="0.500" y="0.500" width="18" height="17" fill="#f4f4f4" stroke="#b0b0b0"/><rect x="1" y="1.500" width="12" height="8" fill="#000"/><path d="M6 3h7" stroke="#00f" stroke-width="1.600"/><path d="M6 5.500h7" stroke="#f00" stroke-width="1.800"/><path d="M6 8h7" stroke="#099" stroke-width="1.400"/><path d="M15.500 3.500h2M15.500 6.500h2" stroke="#000" stroke-width="1.300"/><path d="M8 14.500h8M10 12.500v4M14 12.500v4" stroke="#000" stroke-width="1.100"/><path d="M10 14.500h4" stroke="#f00" stroke-width="1.100"/></svg>
<svg class="a" style="left:834.500px;top:436.5px" width="20" height="19" viewBox="0 0 20 19"><rect x="0.500" y="0.500" width="18" height="17" fill="#f4f4f4" stroke="#b0b0b0"/><rect x="1" y="1" width="17" height="8" fill="#0e0"/><path d="M9 3v4h2.500M13.500 3v4M15 3l1 2 1-2" stroke="#000" stroke-width="1.200" fill="none"/><path d="M9.500 11.500l4 4M15 14.500l2 2-2 0" stroke="#000" stroke-width="1.300" fill="none" stroke-dasharray="1.500 1"/></svg>
<svg class="a" style="left:834.500px;top:462.5px" width="20" height="19" viewBox="0 0 20 19"><rect x="0.500" y="0.500" width="18" height="17" fill="#f4f4f4" stroke="#b0b0b0"/><rect x="1" y="1" width="17" height="9" fill="#000"/><path d="M9.500 2v7M12 4v5M14.500 5v4M16.500 7v2" stroke="#0e0" stroke-width="2"/><path d="M9 14.500c1-2 3-2 4 0s3 2 4 0M9 14.500c1 2 3 2 4 0" stroke="#000" stroke-width="1.100" fill="none"/></svg>
<svg class="a" style="left:834.500px;top:488.5px" width="20" height="19" viewBox="0 0 20 19"><rect x="0.500" y="0.500" width="18" height="17" fill="#f4f4f4" stroke="#b0b0b0"/><rect x="1" y="1" width="13" height="9" fill="#000"/><path d="M8 2.500l5 6M13 2.500l-5 6" stroke="#0e0" stroke-width="2.200"/><path d="M15.500 2.500h2M15.500 5.500h2M15.500 8.500h2" stroke="#000" stroke-width="1.300"/><path d="M9 14.500c1-2 3-2 4 0s3 2 4 0M9 14.500c1 2 3 2 4 0" stroke="#000" stroke-width="1.100" fill="none"/></svg>
<svg class="a" style="left:834.500px;top:514.5px" width="20" height="19" viewBox="0 0 20 19"><rect x="0.500" y="0.500" width="18" height="17" fill="#f4f4f4" stroke="#b0b0b0"/><rect x="1" y="1" width="17" height="7" fill="#040"/><path d="M8 6c1.500-4 3-4 4.500 0 1.500-4 3-4 5.500-1" stroke="#0f0" stroke-width="1.700" fill="none"/><text x="8.500" y="17" font-family="Liberation Sans" font-weight="bold" font-size="8" fill="#00c" textLength="10" shape-rendering="auto">A G</text></svg>
<svg class="a" style="left:834.500px;top:540.5px" width="20" height="19" viewBox="0 0 20 19"><rect x="0.500" y="0.500" width="18" height="17" fill="#f4f4f4" stroke="#b0b0b0"/><path d="M8.500 8c2-1 3-4 5.500-5.500" stroke="#00f" stroke-width="1.300" fill="none"/><path d="M14 4.500h4.500M16.500 2v6" stroke="#000" stroke-width="1.300"/><circle cx="16.500" cy="4.500" r="1.300" fill="#f00"/><text x="8.500" y="17" font-family="Liberation Sans" font-weight="bold" font-size="8" fill="#00c" textLength="10" shape-rendering="auto">A G</text></svg>
<svg class="a" style="left:834.500px;top:566.5px" width="20" height="19" viewBox="0 0 20 19"><rect x="0.500" y="0.500" width="18" height="17" fill="#f4f4f4" stroke="#b0b0b0"/><path d="M8.500 3c2-2 3 0 4 2s2 3 3 1" stroke="#f00" stroke-width="1.300" fill="none"/><path d="M8.500 6.500l5 2" stroke="#00f" stroke-width="1"/><path d="M14.500 3h4.500M16.500 1v4" stroke="#f00" stroke-width="1.300"/><path d="M16.500 5.500v3.500M15 7.500h3.500" stroke="#000" stroke-width="1"/><text x="8.500" y="17" font-family="Liberation Sans" font-weight="bold" font-size="8" fill="#00c" textLength="10" shape-rendering="auto">A G</text></svg>
<svg class="a" style="left:834.500px;top:592.5px" width="20" height="19" viewBox="0 0 20 19"><rect x="0.500" y="0.500" width="18" height="17" fill="#f4f4f4" stroke="#b0b0b0"/><path d="M8.500 3c2-2 3 0 4 2s2 3 3 1" stroke="#f00" stroke-width="1.300" fill="none"/><path d="M8.500 6.500l5 2" stroke="#00f" stroke-width="1"/><path d="M14.500 3h4.500M16.500 1v4" stroke="#f00" stroke-width="1.300"/><path d="M16.500 5.500v3.500M15 7.500h3.500" stroke="#000" stroke-width="1"/><text x="8.500" y="17" font-family="Liberation Sans" font-weight="bold" font-size="8" fill="#00c" textLength="10" shape-rendering="auto">T K</text></svg>
<div class="a" style="left:831px;top:618px;width:28px;height:1px;background:#a8a8a8;"></div>
<div class="a" style="left:831px;top:619px;width:28px;height:1px;background:#fcfcfc;"></div>
<div class="a" style="left:831px;top:666px;width:28px;height:1px;background:#a8a8a8;"></div>
<div class="a" style="left:831px;top:667px;width:28px;height:1px;background:#fcfcfc;"></div>
<div class="a" style="left:831px;top:714px;width:28px;height:1px;background:#a8a8a8;"></div>
<div class="a" style="left:831px;top:715px;width:28px;height:1px;background:#fcfcfc;"></div>
<div class="a" style="left:831px;top:745px;width:28px;height:1px;background:#a8a8a8;"></div>
<div class="a" style="left:831px;top:746px;width:28px;height:1px;background:#fcfcfc;"></div>
<svg class="a" style="left:834.500px;top:628px" width="20" height="19" viewBox="0 0 20 19"><rect x="2" y="0" width="17" height="19" fill="#066"/><path d="M2 1h17M2 18h17" stroke="#333" stroke-width="2" stroke-dasharray="1.500 1"/><rect x="6.500" y="4.500" width="10" height="10" fill="#fe0" stroke="#000"/><path d="M8.500 6.500l5 3-5 3z" fill="#fe0" stroke="#000" stroke-width="1.100"/><path d="M14 9.500h6" stroke="#f00" stroke-width="1.400"/><path d="M0 6.500h6" stroke="#f00" stroke-width="2"/><path d="M0 12.500h6" stroke="#00f" stroke-width="2"/><path d="M15.500 3v13" stroke="#000" stroke-width="1"/></svg>
<svg class="a" style="left:840.500px;top:651px" width="6" height="9" viewBox="0 0 6 9"><path d="M0.500 0.500l4.500 4-4.500 4z" fill="#000"/></svg>
<svg class="a" style="left:833px;top:675px" width="22" height="22" viewBox="0 0 22 22"><path d="M2 9l12-6 6 5-5 4 3 2-8 4-6-5 4-2z" fill="none" stroke="#c0c0c0" stroke-width="1.300"/><path d="M6 10l8 5M8 8l9 3" stroke="#c8c8c8" stroke-width="1"/></svg>
<svg class="a" style="left:840.500px;top:699px" width="6" height="9" viewBox="0 0 6 9"><path d="M0.500 0.500l4.500 4-4.500 4z" fill="#b0b0b0"/></svg>
<svg class="a" style="left:833px;top:720px" width="24" height="24" viewBox="0 0 24 24"><path d="M4 15.500h16" stroke="#f00" stroke-width="1.300"/><path d="M8 13c3-2 3-9 5-10.500s2 2 3 2 1.500-1.500 3-1" stroke="#000" stroke-width="1.300" fill="none"/><circle cx="5" cy="15.500" r="4" fill="#a00" stroke="#600"/><path d="M3 15.500h4M5 13.500v4" stroke="#fff" stroke-width="1.200"/></svg>
<svg class="a" style="left:0;top:0" width="862" height="1026" viewBox="0 0 862 1026">
<g stroke="#f00" stroke-width="1.050" fill="none"><path d="M384 251.500H453M494 251.500H519.500V285"/><path d="M468.600 226.500H443.500V251.500M485.700 226.500H511.500V251.500"/><path d="M384 268.500H418.500V361"/><path d="M418.500 344.500H519.500V327"/><path d="M519.500 268.500H578.500V260"/><path d="M519.500 336.500H587.500V260"/></g>
<g fill="#f00"><circle cx="443.500" cy="251.500" r="1.500"/><circle cx="511.500" cy="251.500" r="1.500"/><circle cx="519.500" cy="268.500" r="1.500"/><circle cx="519.500" cy="336.500" r="1.500"/><circle cx="418.500" cy="344.500" r="1.500"/></g>
<g stroke="#000" stroke-width="1.100" fill="none"><path d="M453 251.500H460.200L462.200 248.200 467.500 256.500 471 248.200 475.800 256.500 479.700 248.200 484.600 256.500 487 251.500H494"/><path d="M519.500 285V294.500L523 296.500 515.500 300.500 524 304.500 515.500 308.500 524 312.500 515.500 316.500 519.500 318.500V327"/><path d="M418.500 361V370M410 370.500H427M413 373.500H424M415.500 376.500H421.500"/><path d="M372 251.500H384M372 268.500H384M372 285.500H385"/><path d="M468.600 214V226.500M485.700 214V226.500"/></g>
<rect x="342.100" y="243.100" width="33.700" height="50.500" fill="#b9d8b4" stroke="#000" stroke-width="1.100"/><rect x="347.800" y="245.5" width="9" height="13" fill="#bebebe" stroke="#fff" stroke-width="1"/><rect x="347.800" y="262.3" width="9" height="13" fill="#bebebe" stroke="#fff" stroke-width="1"/><rect x="347.800" y="279.2" width="9" height="13" fill="#bebebe" stroke="#fff" stroke-width="1"/><g stroke="#000" stroke-width="1.100" fill="none"><path d="M353 247.500l-1.500 2 2 2-2 2 2 2-1.500 2"/><path d="M354 264.500c-3 1-3 3-1.500 4.500s1.500 3.500-1.500 4.500"/><path d="M354.500 281.500h-2v3.500h2v3h-3.500"/><path d="M361 251.500h5M363.500 249v5M364.300 282.500v6"/></g><path d="M372 251.500H384M372 268.500H384M372 285.500H385" stroke="#000" stroke-width="1.100"/><circle cx="370" cy="251.5" r="2.100" fill="#707070" stroke="#000" stroke-width="1"/><circle cx="370" cy="268.5" r="2.100" fill="#707070" stroke="#000" stroke-width="1"/><circle cx="370" cy="285.5" r="2.100" fill="#707070" stroke="#000" stroke-width="1"/><text x="0" y="0" transform="translate(366.200,277.500) rotate(-90)" font-family="Liberation Sans" font-size="7.800" fill="#3f6347" textLength="17.500">COM</text><rect x="460.300" y="181.300" width="33.300" height="36.400" fill="#b9d8b4" stroke="#000" stroke-width="1.100"/><rect x="463.700" y="184.500" width="26.500" height="13" fill="#bebebe" stroke="#fff" stroke-width="1"/><g stroke="#000" stroke-width="1.100" fill="none"><path d="M467 197c5-5 15-5 21 0.500M477.500 198.500l5-10.500"/><path d="M466 204.500h5.500M468.700 201.800v5.400M483 204.500h5"/></g><path d="M468.600 214V226.500M485.700 214V226.500" stroke="#000" stroke-width="1.100"/><circle cx="468.6" cy="212" r="2.100" fill="#707070" stroke="#000" stroke-width="1"/><circle cx="485.7" cy="212" r="2.100" fill="#707070" stroke="#000" stroke-width="1"/><rect x="570.300" y="184.500" width="92.700" height="66" fill="#b9d8b4" stroke="#000" stroke-width="1.100"/><rect x="573.700" y="187.800" width="58" height="40.500" fill="#bebebe" stroke="#fff" stroke-width="1"/><g stroke="#000" stroke-width="1" fill="none"><path d="M577 208.500C581 183 597 182 601 208S621 234 625 206"/><path d="M577 208.500C582 191 596 191 601 207S620 226 625 206"/></g><g stroke="#000" stroke-width="1.100" fill="none"><path d="M578.500 244V260M580 244.500H587.500V260M612.300 244V260M614 244.500H621.500V260"/><path d="M656 218.500H672M654.500 219V226.500H672"/></g><circle cx="578.5" cy="244" r="2.700" fill="#999" stroke="#000" stroke-width="0.900"/><circle cx="578.5" cy="244" r="1.700" fill="#000"/><circle cx="612.3" cy="244" r="2.700" fill="#999" stroke="#000" stroke-width="0.900"/><circle cx="612.3" cy="244" r="1.700" fill="#000"/><circle cx="654.4" cy="217.6" r="2.700" fill="#999" stroke="#000" stroke-width="0.900"/><circle cx="654.4" cy="217.6" r="1.700" fill="#000"/><g stroke="#000" stroke-width="0.900"><path d="M572.500 247.500h3M574 246v3M589.500 247.500h3.500M606.500 247.500h3M608 246v3M623 247.500h3.500M658 213.500h3M659.500 212v3M657.500 228.500h3.500"/></g><g font-family="Liberation Sans" font-size="7" fill="#333"><text x="576" y="238.300">A</text><text x="610" y="237.500">B</text><text x="638.700" y="209.500" textLength="22.500" font-size="7.300">Ext Trig</text></g></svg>
<div class="t" style="left:461.9px;top:164.5px;font-size:12px;letter-spacing:-0.08px;color:#1a1a1a;font-family:'Liberation Mono',monospace;-webkit-text-stroke:0.400px #1a1a1a;">XMM2</div>
<div class="t" style="left:347.8px;top:226.5px;font-size:12px;letter-spacing:0.10px;color:#1a1a1a;font-family:'Liberation Mono',monospace;-webkit-text-stroke:0.400px #1a1a1a;">XFG1</div>
<div class="t" style="left:606.4px;top:167.5px;font-size:12px;letter-spacing:-0.15px;color:#1a1a1a;font-family:'Liberation Mono',monospace;-webkit-text-stroke:0.400px #1a1a1a;">XSC2</div>
<div class="t" style="left:440.2px;top:264.5px;font-size:9.2px;letter-spacing:0.62px;color:#111;">R1</div>
<div class="t" style="left:463.2px;top:269.2px;font-size:9.2px;letter-spacing:0.80px;color:#111;">1kΩ</div>
<div class="t" style="left:492.8px;top:293.3px;font-size:9.2px;letter-spacing:0.87px;color:#111;">R2</div>
<div class="t" style="left:469.4px;top:309.4px;font-size:9.2px;letter-spacing:0.80px;color:#111;">1kΩ</div>
<div class="win" style="left:67px;top:22px;width:241px;height:290px"><div class="wint" style="height:36px"></div></div>
<div class="t" style="left:76.5px;top:31.7px;font-size:15px;letter-spacing:-0.24px;">Function generator-XFG1</div>
<svg class="a" style="left:280px;top:32px" width="15" height="15" viewBox="0 0 15 15"><path d="M1.500 1.500l12 12M13.500 1.500l-12 12" stroke="#1a1a1a" stroke-width="1.200"/></svg>
<div class="grp" style="left:71px;top:68px;width:231px;height:40px;border-bottom:none"></div>
<div class="a" style="left:77px;top:60px;width:70px;height:14px;background:#f0f0f0;"></div>
<div class="t" style="left:79.5px;top:62.6px;font-size:12.5px;letter-spacing:0.31px;">Waveforms</div>
<div class="grp" style="left:71px;top:112px;width:231px;height:147px"></div>
<div class="a" style="left:77px;top:105px;width:85px;height:14px;background:#f0f0f0;"></div>
<div class="t" style="left:79.7px;top:106.7px;font-size:12.5px;letter-spacing:0.07px;">Signal options</div>
<div class="btn on" style="left:83px;top:81px;width:68px;height:20px"></div>
<div class="btn" style="left:155.500px;top:81px;width:67.500px;height:20px"></div>
<div class="btn" style="left:227.500px;top:81px;width:67.500px;height:20px"></div>
<svg class="a" style="left:83px;top:81px" width="212" height="20" viewBox="83 81 212 20"><g stroke="#000" stroke-width="1.100" fill="none"><path d="M89.700 91.500C93 89 95 87.700 97 87.700H102C106 87.700 110 94 114 94H120C124 94 128 87.700 132 87.700H139C141 87.700 143 89 145.700 90.500"/><path d="M160.400 94L172.500 87.700 185 93.700 196.600 87.700 209 94 216.400 91"/><path d="M232.400 94.500H244V87.700H256V94.500H265V87.700H275V94.500H288.400"/></g><g fill="#000"><rect x="96" y="86.800" width="7" height="1.600"/><rect x="133" y="86.800" width="7" height="1.600"/><rect x="113.500" y="93.200" width="7" height="1.600"/><rect x="171.500" y="86.800" width="2" height="2"/><rect x="195.600" y="86.800" width="2" height="2"/><rect x="184" y="92.800" width="2" height="2"/><rect x="208" y="93" width="2" height="2"/></g></svg>
<div class="sunk" style="left:159px;top:124.0px;width:94px;height:23.5px;background:#fff"></div>
<div class="sunk" style="left:255px;top:124.0px;width:42.5px;height:23.5px;background:#fff"></div>
<div class="t" style="left:84.0px;top:130.7px;font-size:12.5px;letter-spacing:0.05px;">Frequency:</div>
<div class="t" style="left:166.0px;top:130.1px;font-size:12.5px;">100</div>
<div class="t" style="left:263.5px;top:129.1px;font-size:12.5px;">Hz</div>
<div class="sunk" style="left:159px;top:148.2px;width:94px;height:23.5px;background:#f0f0f0"></div>
<div class="sunk" style="left:255px;top:148.2px;width:42.5px;height:23.5px;background:#f0f0f0"></div>
<div class="t" style="left:84.0px;top:154.9px;font-size:12.5px;letter-spacing:0.17px;">Duty cycle:</div>
<div class="t" style="left:166.0px;top:154.3px;font-size:12.5px;color:#838383;">50</div>
<div class="t" style="left:263.5px;top:153.3px;font-size:12.5px;color:#838383;">%</div>
<div class="sunk" style="left:159px;top:172.4px;width:94px;height:23.5px;background:#fff"></div>
<div class="sunk" style="left:255px;top:172.4px;width:42.5px;height:23.5px;background:#fff"></div>
<div class="t" style="left:84.0px;top:179.1px;font-size:12.5px;letter-spacing:0.39px;">Amplitude:</div>
<div class="t" style="left:166.0px;top:178.5px;font-size:12.5px;">10</div>
<div class="t" style="left:263.5px;top:177.5px;font-size:12.5px;">Vp</div>
<div class="sunk" style="left:159px;top:196.6px;width:94px;height:23.5px;background:#fff"></div>
<div class="sunk" style="left:255px;top:196.6px;width:42.5px;height:23.5px;background:#fff"></div>
<div class="t" style="left:84.0px;top:203.3px;font-size:12.5px;letter-spacing:0.34px;">Offset:</div>
<div class="t" style="left:166.0px;top:202.7px;font-size:12.5px;">0</div>
<div class="t" style="left:263.5px;top:201.7px;font-size:12.5px;">V</div>
<div class="a" style="left:113.500px;top:227.500px;width:142px;height:24.500px;background:#f8f8f8;border:1px solid #ebebeb;border-radius:4px"></div>
<div class="t" style="left:135.4px;top:233.8px;font-size:13px;letter-spacing:0.05px;color:#8c8c8c;">Set rise/Fall time</div>
<div class="t" style="left:93.0px;top:272.2px;font-size:12.5px;">+</div>
<div class="t" style="left:163.5px;top:268.7px;font-size:12.5px;letter-spacing:-0.08px;">Common</div>
<div class="a" style="left:270.5px;top:282px;width:7px;height:1.3px;background:#000;"></div>
<div class="a" style="left:89px;top:285.6px;width:16px;height:16px;border-radius:50%;background:#fff;border:4.500px solid #bdbdbd"></div>
<div class="a" style="left:172px;top:285.6px;width:16px;height:16px;border-radius:50%;background:#fff;border:4.500px solid #bdbdbd"></div>
<div class="a" style="left:265.5px;top:287.0px;width:17px;height:17px;border-radius:50%;background:#fdfdfd;border:1px solid #b4b4b4"></div>
<svg class="a" style="left:296px;top:300px" width="12" height="12" viewBox="0 0 12 12"><g fill="#9c9c9c"><rect x="8" y="0" width="2" height="2"/><rect x="4" y="4" width="2" height="2"/><rect x="8" y="4" width="2" height="2"/><rect x="0" y="8" width="2" height="2"/><rect x="4" y="8" width="2" height="2"/><rect x="8" y="8" width="2" height="2"/></g></svg>
<div class="win ina" style="left:80px;top:468px;width:642px;height:546.5px"><div class="wint" style="height:38px"></div></div>
<div class="t" style="left:89.5px;top:479.1px;font-size:15px;letter-spacing:-0.31px;color:#9a9a9a;">Oscilloscope-XSC2</div>
<div class="a" style="left:80px;top:505px;width:641px;height:309px;background:#000;border-style:solid;border-width:1px 2px 2px 1px;border-color:#5a5a5a #fff #fff #5a5a5a;box-shadow:inset 2px 2px 0 #8c8c8c;"></div>
<svg class="a" style="left:0;top:0" width="862" height="1026" viewBox="0 0 862 1026">
<g stroke="#cfcfcf" stroke-width="1" stroke-dasharray="3.500 2.400" fill="none"><path d="M153.5 519V804"/><path d="M215.5 519V804"/><path d="M277.5 519V804"/><path d="M339.5 519V804"/><path d="M401.5 519V804"/><path d="M463.5 519V804"/><path d="M525.5 519V804"/><path d="M587.5 519V804"/><path d="M649.5 519V804"/><path d="M93 564.5H711"/><path d="M93 612.5H711"/><path d="M93 708.5H711"/><path d="M93 756.5H711"/></g>
<path d="M92 516.500H711.500V804.500H92" stroke="#fff" stroke-width="1.200" fill="none"/><g stroke="#fff" stroke-width="1.200" fill="none"><path d="M92 660.500H715M401.500 513V516"/><path d="M91.5 658V664M103.5 659V663M116.5 659V663M128.5 659V663M141.5 659V663M153.5 658V664M165.5 659V663M178.5 659V663M190.5 659V663M203.5 659V663M215.5 658V664M227.5 659V663M240.5 659V663M252.5 659V663M265.5 659V663M277.5 658V664M289.5 659V663M302.5 659V663M314.5 659V663M327.5 659V663M339.5 658V664M351.5 659V663M364.5 659V663M376.5 659V663M389.5 659V663M401.5 658V664M413.5 659V663M426.5 659V663M438.5 659V663M451.5 659V663M463.5 658V664M475.5 659V663M488.5 659V663M500.5 659V663M513.5 659V663M525.5 658V664M537.5 659V663M550.5 659V663M562.5 659V663M575.5 659V663M587.5 658V664M599.5 659V663M612.5 659V663M624.5 659V663M637.5 659V663M649.5 658V664M661.5 659V663M674.5 659V663M686.5 659V663M699.5 659V663M711.5 658V664" stroke-width="1"/></g>
<polyline points="91.5,552.8 92.5,555.5 93.5,558.5 94.5,561.8 95.5,565.4 96.5,569.1 97.5,573.2 98.5,577.4 99.5,581.9 100.5,586.5 101.5,591.4 102.5,596.4 103.5,601.6 104.5,606.9 105.5,612.4 106.5,618.0 107.5,623.7 108.5,629.5 109.5,635.4 110.5,641.4 111.5,647.4 112.5,653.4 113.5,659.4 114.5,665.5 115.5,671.5 116.5,677.6 117.5,683.5 118.5,689.4 119.5,695.3 120.5,701.0 121.5,706.7 122.5,712.2 123.5,717.6 124.5,722.8 125.5,727.9 126.5,732.8 127.5,737.5 128.5,742.1 129.5,746.4 130.5,750.5 131.5,754.3 132.5,758.0 133.5,761.4 134.5,764.5 135.5,767.3 136.5,769.9 137.5,772.2 138.5,774.2 139.5,775.9 140.5,777.3 141.5,778.5 142.5,779.3 143.5,779.8 144.5,780.0 145.5,779.9 146.5,779.5 147.5,778.8 148.5,777.8 149.5,776.4 150.5,774.8 151.5,772.9 152.5,770.7 153.5,768.2 154.5,765.5 155.5,762.5 156.5,759.2 157.5,755.6 158.5,751.9 159.5,747.8 160.5,743.6 161.5,739.1 162.5,734.5 163.5,729.6 164.5,724.6 165.5,719.4 166.5,714.1 167.5,708.6 168.5,703.0 169.5,697.3 170.5,691.5 171.5,685.6 172.5,679.6 173.5,673.6 174.5,667.6 175.5,661.6 176.5,655.5 177.5,649.5 178.5,643.4 179.5,637.5 180.5,631.6 181.5,625.7 182.5,620.0 183.5,614.3 184.5,608.8 185.5,603.4 186.5,598.2 187.5,593.1 188.5,588.2 189.5,583.5 190.5,578.9 191.5,574.6 192.5,570.5 193.5,566.7 194.5,563.0 195.5,559.6 196.5,556.5 197.5,553.7 198.5,551.1 199.5,548.8 200.5,546.8 201.5,545.1 202.5,543.7 203.5,542.5 204.5,541.7 205.5,541.2 206.5,541.0 207.5,541.1 208.5,541.5 209.5,542.2 210.5,543.2 211.5,544.6 212.5,546.2 213.5,548.1 214.5,550.3 215.5,552.8 216.5,555.5 217.5,558.5 218.5,561.8 219.5,565.4 220.5,569.1 221.5,573.2 222.5,577.4 223.5,581.9 224.5,586.5 225.5,591.4 226.5,596.4 227.5,601.6 228.5,606.9 229.5,612.4 230.5,618.0 231.5,623.7 232.5,629.5 233.5,635.4 234.5,641.4 235.5,647.4 236.5,653.4 237.5,659.4 238.5,665.5 239.5,671.5 240.5,677.6 241.5,683.5 242.5,689.4 243.5,695.3 244.5,701.0 245.5,706.7 246.5,712.2 247.5,717.6 248.5,722.8 249.5,727.9 250.5,732.8 251.5,737.5 252.5,742.1 253.5,746.4 254.5,750.5 255.5,754.3 256.5,758.0 257.5,761.4 258.5,764.5 259.5,767.3 260.5,769.9 261.5,772.2 262.5,774.2 263.5,775.9 264.5,777.3 265.5,778.5 266.5,779.3 267.5,779.8 268.5,780.0 269.5,779.9 270.5,779.5 271.5,778.8 272.5,777.8 273.5,776.4 274.5,774.8 275.5,772.9 276.5,770.7 277.5,768.2 278.5,765.5 279.5,762.5 280.5,759.2 281.5,755.6 282.5,751.9 283.5,747.8 284.5,743.6 285.5,739.1 286.5,734.5 287.5,729.6 288.5,724.6 289.5,719.4 290.5,714.1 291.5,708.6 292.5,703.0 293.5,697.3 294.5,691.5 295.5,685.6 296.5,679.6 297.5,673.6 298.5,667.6 299.5,661.6 300.5,655.5 301.5,649.5 302.5,643.4 303.5,637.5 304.5,631.6 305.5,625.7 306.5,620.0 307.5,614.3 308.5,608.8 309.5,603.4 310.5,598.2 311.5,593.1 312.5,588.2 313.5,583.5 314.5,578.9 315.5,574.6 316.5,570.5 317.5,566.7 318.5,563.0 319.5,559.6 320.5,556.5 321.5,553.7 322.5,551.1 323.5,548.8 324.5,546.8 325.5,545.1 326.5,543.7 327.5,542.5 328.5,541.7 329.5,541.2 330.5,541.0 331.5,541.1 332.5,541.5 333.5,542.2 334.5,543.2 335.5,544.6 336.5,546.2 337.5,548.1 338.5,550.3 339.5,552.8 340.5,555.5 341.5,558.5 342.5,561.8 343.5,565.4 344.5,569.1 345.5,573.2 346.5,577.4 347.5,581.9 348.5,586.5 349.5,591.4 350.5,596.4 351.5,601.6 352.5,606.9 353.5,612.4 354.5,618.0 355.5,623.7 356.5,629.5 357.5,635.4 358.5,641.4 359.5,647.4 360.5,653.4 361.5,659.4 362.5,665.5 363.5,671.5 364.5,677.6 365.5,683.5 366.5,689.4 367.5,695.3 368.5,701.0 369.5,706.7 370.5,712.2 371.5,717.6 372.5,722.8 373.5,727.9 374.5,732.8 375.5,737.5 376.5,742.1 377.5,746.4 378.5,750.5 379.5,754.3 380.5,758.0 381.5,761.4 382.5,764.5 383.5,767.3 384.5,769.9 385.5,772.2 386.5,774.2 387.5,775.9 388.5,777.3 389.5,778.5 390.5,779.3 391.5,779.8 392.5,780.0 393.5,779.9 394.5,779.5 395.5,778.8 396.5,777.8 397.5,776.4 398.5,774.8 399.5,772.9 400.5,770.7 401.5,768.2 402.5,765.5 403.5,762.5 404.5,759.2 405.5,755.6 406.5,751.9 407.5,747.8 408.5,743.6 409.5,739.1 410.5,734.5 411.5,729.6 412.5,724.6 413.5,719.4 414.5,714.1 415.5,708.6 416.5,703.0 417.5,697.3 418.5,691.5 419.5,685.6 420.5,679.6 421.5,673.6 422.5,667.6 423.5,661.6 424.5,655.5 425.5,649.5 426.5,643.4 427.5,637.5 428.5,631.6 429.5,625.7 430.5,620.0 431.5,614.3 432.5,608.8 433.5,603.4 434.5,598.2 435.5,593.1 436.5,588.2 437.5,583.5 438.5,578.9 439.5,574.6 440.5,570.5 441.5,566.7 442.5,563.0 443.5,559.6 444.5,556.5 445.5,553.7 446.5,551.1 447.5,548.8 448.5,546.8 449.5,545.1 450.5,543.7 451.5,542.5 452.5,541.7 453.5,541.2 454.5,541.0 455.5,541.1 456.5,541.5 457.5,542.2 458.5,543.2 459.5,544.6 460.5,546.2 461.5,548.1 462.5,550.3 463.5,552.8 464.5,555.5 465.5,558.5 466.5,561.8 467.5,565.4 468.5,569.1 469.5,573.2 470.5,577.4 471.5,581.9 472.5,586.5 473.5,591.4 474.5,596.4 475.5,601.6 476.5,606.9 477.5,612.4 478.5,618.0 479.5,623.7 480.5,629.5 481.5,635.4 482.5,641.4 483.5,647.4 484.5,653.4 485.5,659.4 486.5,665.5 487.5,671.5 488.5,677.6 489.5,683.5 490.5,689.4 491.5,695.3 492.5,701.0 493.5,706.7 494.5,712.2 495.5,717.6 496.5,722.8 497.5,727.9 498.5,732.8 499.5,737.5 500.5,742.1 501.5,746.4 502.5,750.5 503.5,754.3 504.5,758.0 505.5,761.4 506.5,764.5 507.5,767.3 508.5,769.9 509.5,772.2 510.5,774.2 511.5,775.9 512.5,777.3 513.5,778.5 514.5,779.3 515.5,779.8 516.5,780.0 517.5,779.9 518.5,779.5 519.5,778.8 520.5,777.8 521.5,776.4 522.5,774.8 523.5,772.9 524.5,770.7 525.5,768.2 526.5,765.5 527.5,762.5 528.5,759.2 529.5,755.6 530.5,751.9 531.5,747.8 532.5,743.6 533.5,739.1 534.5,734.5 535.5,729.6 536.5,724.6 537.5,719.4 538.5,714.1 539.5,708.6 540.5,703.0 541.5,697.3 542.5,691.5 543.5,685.6 544.5,679.6 545.5,673.6 546.5,667.6 547.5,661.6 548.5,655.5 549.5,649.5 550.5,643.4 551.5,637.5 552.5,631.6 553.5,625.7 554.5,620.0 555.5,614.3 556.5,608.8 557.5,603.4 558.5,598.2 559.5,593.1 560.5,588.2 561.5,583.5 562.5,578.9 563.5,574.6 564.5,570.5 565.5,566.7 566.5,563.0 567.5,559.6 568.5,556.5 569.5,553.7 570.5,551.1 571.5,548.8 572.5,546.8 573.5,545.1 574.5,543.7 575.5,542.5 576.5,541.7 577.5,541.2 578.5,541.0 579.5,541.1 580.5,541.5 581.5,542.2 582.5,543.2 583.5,544.6 584.5,546.2 585.5,548.1 586.5,550.3 587.5,552.8 588.5,555.5 589.5,558.5 590.5,561.8 591.5,565.4 592.5,569.1 593.5,573.2 594.5,577.4 595.5,581.9 596.5,586.5 597.5,591.4 598.5,596.4 599.5,601.6 600.5,606.9 601.5,612.4 602.5,618.0 603.5,623.7 604.5,629.5 605.5,635.4 606.5,641.4 607.5,647.4 608.5,653.4 609.5,659.4 610.5,665.5 611.5,671.5 612.5,677.6 613.5,683.5 614.5,689.4 615.5,695.3 616.5,701.0 617.5,706.7 618.5,712.2 619.5,717.6 620.5,722.8 621.5,727.9 622.5,732.8 623.5,737.5 624.5,742.1 625.5,746.4 626.5,750.5 627.5,754.3 628.5,758.0 629.5,761.4 630.5,764.5 631.5,767.3 632.5,769.9 633.5,772.2 634.5,774.2 635.5,775.9 636.5,777.3 637.5,778.5 638.5,779.3 639.5,779.8 640.5,780.0 641.5,779.9 642.5,779.5 643.5,778.8 644.5,777.8 645.5,776.4 646.5,774.8 647.5,772.9 648.5,770.7 649.5,768.2 650.5,765.5 651.5,762.5 652.5,759.2 653.5,755.6 654.5,751.9 655.5,747.8 656.5,743.6 657.5,739.1 658.5,734.5 659.5,729.6 660.5,724.6 661.5,719.4 662.5,714.1" stroke="#ff0808" stroke-width="1.150" fill="none"/>
<path d="M91.500 517V804.500" stroke="#20e020" stroke-width="1.300"/><path d="M83 508H100.300L91.700 516.500Z" fill="#00e8e8"/><path d="M84.500 510H98.500L91.700 516.500Z" fill="#f020f0"/><rect x="90" y="509.500" width="2.500" height="5" fill="#ff0"/><path d="M90 509.500h2.500M91 511.300h1.500M90 513h1.500" stroke="#000" stroke-width="0.800"/><circle cx="91.500" cy="552.500" r="2.600" fill="none" stroke="#f030f0" stroke-width="1.100"/></svg>
<div class="a" style="left:651px;top:823px;width:50px;height:1px;background:#8c8c8c;"></div>
<div class="a" style="left:81px;top:836px;width:68px;height:72px;border:1px solid;border-color:#fdfdfd #a8a8a8 #a8a8a8 #fdfdfd;background:#f0f0f0"></div>
<div class="t" style="left:87.0px;top:848.4px;font-size:12.5px;letter-spacing:0.21px;">T1</div>
<div class="t" style="left:87.0px;top:866.4px;font-size:12.5px;letter-spacing:0.21px;">T2</div>
<div class="t" style="left:87.0px;top:889.4px;font-size:12.5px;letter-spacing:0.13px;">T2-T1</div>
<div class="btn" style="left:110px;top:844px;width:17px;height:18px;border-color:#e2e2e2"></div>
<div class="btn" style="left:130px;top:844px;width:17px;height:18px;border-color:#e2e2e2"></div>
<div class="btn" style="left:110px;top:864px;width:17px;height:18px;border-color:#e2e2e2"></div>
<div class="btn" style="left:130px;top:864px;width:17px;height:18px;border-color:#e2e2e2"></div>
<svg class="a" style="left:112.5px;top:848px" width="12" height="11" viewBox="0 0 12 11"><path d="M0.500 5.500L5.800 0.500V3.800H11.500V7.200H5.800V10.500Z" fill="#000"/></svg>
<svg class="a" style="left:132.5px;top:848px" width="12" height="11" viewBox="0 0 12 11"><path d="M11.500 5.500L6.200 0.500V3.800H0.500V7.200H6.200V10.500Z" fill="#000"/></svg>
<svg class="a" style="left:112.5px;top:868px" width="12" height="11" viewBox="0 0 12 11"><path d="M0.500 5.500L5.800 0.500V3.800H11.500V7.200H5.800V10.500Z" fill="#000"/></svg>
<svg class="a" style="left:132.5px;top:868px" width="12" height="11" viewBox="0 0 12 11"><path d="M11.500 5.500L6.200 0.500V3.800H0.500V7.200H6.200V10.500Z" fill="#000"/></svg>
<div class="sunk" style="left:151px;top:836px;width:376px;height:72px;background:#fff"></div>
<div class="t" style="left:183.5px;top:839.9px;font-size:12.5px;letter-spacing:0.42px;">Time</div>
<div class="t" style="left:260.0px;top:839.9px;font-size:12.5px;letter-spacing:-0.10px;">Channel_A</div>
<div class="t" style="left:356.0px;top:839.9px;font-size:12.5px;letter-spacing:-0.15px;">Channel_B</div>
<div class="t" style="left:160.0px;top:855.9px;font-size:12.5px;letter-spacing:0.17px;">633.213 ms</div>
<div class="t" style="left:267.5px;top:855.9px;font-size:12.5px;letter-spacing:0.20px;">4.507 V</div>
<div class="t" style="left:160.0px;top:871.9px;font-size:12.5px;letter-spacing:0.17px;">633.213 ms</div>
<div class="t" style="left:267.5px;top:871.9px;font-size:12.5px;letter-spacing:0.20px;">4.507 V</div>
<div class="t" style="left:172.0px;top:887.9px;font-size:12.5px;letter-spacing:0.21px;">0.000 s</div>
<div class="t" style="left:267.5px;top:887.9px;font-size:12.5px;letter-spacing:0.20px;">0.000 V</div>
<div class="btn" style="left:536.5px;top:844.5px;width:70px;height:25px;"></div>
<div class="t" style="left:549.1px;top:852.1px;font-size:12.5px;letter-spacing:-0.26px;">Reverse</div>
<div class="btn" style="left:536.5px;top:878.5px;width:70px;height:25px;"></div>
<div class="t" style="left:557.7px;top:885.8px;font-size:12.5px;letter-spacing:-0.22px;">Save</div>
<div class="t" style="left:619.3px;top:898.1px;font-size:12.5px;letter-spacing:0.19px;">Ext. trigger</div>
<div class="a" style="left:686.2px;top:896.2px;width:17px;height:17px;border-radius:50%;background:#fdfdfd;border:1px solid #b4b4b4"></div>
<div class="grp" style="left:81px;top:926px;width:153px;height:88px;border-bottom:none"></div>
<div class="a" style="left:86.6px;top:920px;width:60.8px;height:13px;background:#f0f0f0;"></div>
<div class="t" style="left:89.6px;top:919.5px;font-size:12.5px;letter-spacing:0.05px;">Timebase</div>
<div class="grp" style="left:235px;top:926px;width:149px;height:88px;border-bottom:none"></div>
<div class="a" style="left:240.5px;top:920px;width:63.5px;height:13px;background:#f0f0f0;"></div>
<div class="t" style="left:243.5px;top:919.5px;font-size:12.5px;letter-spacing:-0.02px;">Channel A</div>
<div class="grp" style="left:385px;top:926px;width:153px;height:88px;border-bottom:none"></div>
<div class="a" style="left:390.5px;top:920px;width:62.2px;height:13px;background:#f0f0f0;"></div>
<div class="t" style="left:393.5px;top:919.5px;font-size:12.5px;letter-spacing:-0.24px;">Channel B</div>
<div class="grp" style="left:539px;top:926px;width:181px;height:88px;border-bottom:none"></div>
<div class="a" style="left:544.4px;top:920px;width:47.8px;height:13px;background:#f0f0f0;"></div>
<div class="t" style="left:547.4px;top:919.5px;font-size:12.5px;letter-spacing:0.38px;">Trigger</div>
<div class="t" style="left:83.2px;top:941.1px;font-size:12.5px;letter-spacing:0.01px;">Scale:</div>
<div class="sunk" style="left:127.5px;top:934px;width:99px;height:22.5px;background:#fff"></div>
<div class="t" style="left:133.4px;top:938.7px;font-size:12.5px;letter-spacing:0.12px;">5 ms/Div</div>
<div class="t" style="left:83.2px;top:964.9px;font-size:12.5px;letter-spacing:0.14px;">X pos.(Div):</div>
<div class="sunk" style="left:156px;top:960px;width:70.5px;height:22px;background:#fff"></div>
<div class="t" style="left:161.7px;top:964.5px;font-size:12.5px;">0</div>
<div class="btn on" style="left:89px;top:988px;width:28px;height:22px;"></div>
<div class="t" style="left:92.8px;top:992.6px;font-size:12.5px;letter-spacing:0.35px;">Y/T</div>
<div class="btn" style="left:119.5px;top:988px;width:30px;height:22px;"></div>
<div class="t" style="left:123.5px;top:992.6px;font-size:12.5px;letter-spacing:-0.08px;">Add</div>
<div class="btn" style="left:154.5px;top:988px;width:30px;height:22px;"></div>
<div class="t" style="left:159.2px;top:992.6px;font-size:12.5px;letter-spacing:0.12px;">B/A</div>
<div class="btn" style="left:188px;top:988px;width:32px;height:22px;"></div>
<div class="t" style="left:193.8px;top:992.6px;font-size:12.5px;letter-spacing:0.12px;">A/B</div>
<div class="t" style="left:237.4px;top:941.1px;font-size:12.5px;letter-spacing:0.01px;">Scale:</div>
<div class="sunk" style="left:279px;top:934px;width:101px;height:22.5px;background:#fff"></div>
<div class="t" style="left:285.0px;top:938.7px;font-size:12.5px;letter-spacing:0.15px;">2  V/Div</div>
<div class="t" style="left:237.4px;top:964.9px;font-size:12.5px;letter-spacing:0.08px;">Y pos.(Div):</div>
<div class="sunk" style="left:309.5px;top:960px;width:70.5px;height:22px;background:#fff"></div>
<div class="t" style="left:315.6px;top:964.5px;font-size:12.5px;">0</div>
<div class="btn on" style="left:238px;top:988px;width:28px;height:22px;"></div>
<div class="t" style="left:244.2px;top:992.6px;font-size:12.5px;letter-spacing:-0.93px;">AC</div>
<div class="btn" style="left:269px;top:988px;width:28px;height:22px;"></div>
<div class="t" style="left:279.5px;top:992.6px;font-size:12.5px;">0</div>
<div class="btn" style="left:299.5px;top:988px;width:29.5px;height:22px;"></div>
<div class="t" style="left:306.0px;top:992.6px;font-size:12.5px;letter-spacing:-0.78px;">DC</div>
<div class="a" style="left:359.2px;top:990px;width:16px;height:16px;border-radius:50%;background:#fff;border:4.500px solid #bdbdbd"></div>
<div class="t" style="left:388.4px;top:941.1px;font-size:12.5px;letter-spacing:0.01px;">Scale:</div>
<div class="sunk" style="left:433px;top:934px;width:101px;height:22.5px;background:#fff"></div>
<div class="t" style="left:439.4px;top:938.7px;font-size:12.5px;letter-spacing:0.15px;">2  V/Div</div>
<div class="t" style="left:388.4px;top:964.9px;font-size:12.5px;letter-spacing:0.08px;">Y pos.(Div):</div>
<div class="sunk" style="left:463.5px;top:960px;width:70.5px;height:22px;background:#fff"></div>
<div class="t" style="left:469.8px;top:964.5px;font-size:12.5px;">0</div>
<div class="btn on" style="left:390.5px;top:990.5px;width:27.5px;height:21.5px;"></div>
<div class="t" style="left:396.5px;top:994.9px;font-size:12.5px;letter-spacing:-0.93px;">AC</div>
<div class="btn" style="left:421px;top:990.5px;width:24.5px;height:21.5px;"></div>
<div class="t" style="left:429.8px;top:994.9px;font-size:12.5px;">0</div>
<div class="btn" style="left:448.5px;top:990.5px;width:29px;height:21.5px;"></div>
<div class="t" style="left:454.8px;top:994.9px;font-size:12.5px;letter-spacing:-0.78px;">DC</div>
<div class="btn" style="left:480.5px;top:990.5px;width:21px;height:21.5px;"></div>
<div class="t" style="left:488.9px;top:994.4px;font-size:12.5px;">-</div>
<div class="a" style="left:517.9px;top:991.1px;width:17px;height:17px;border-radius:50%;background:#fdfdfd;border:1px solid #b4b4b4"></div>
<div class="t" style="left:543.5px;top:941.7px;font-size:12.5px;letter-spacing:-0.19px;">Edge:</div>
<div class="btn on" style="left:595.5px;top:938.3px;width:19px;height:20px;"></div>
<div class="btn" style="left:616.5px;top:938.3px;width:18.5px;height:18.5px;"></div>
<svg class="a" style="left:595px;top:938px" width="42" height="20" viewBox="0 0 42 20"><g stroke="#000" stroke-width="1.300" fill="none"><path d="M5 15.500H10V5.500H15M7.500 10.500H12.500"/><path d="M25.500 5H30V13.500H36M30 9.500H33.500"/></g></svg>
<div class="btn on" style="left:641px;top:938.3px;width:20.5px;height:21.5px;"></div>
<div class="t" style="left:647.1px;top:943.7px;font-size:12.5px;">A</div>
<div class="btn" style="left:664.5px;top:938.3px;width:18.5px;height:20px;background:#f6f6f6;border-color:#e6e6e6;"></div>
<div class="t" style="left:669.6px;top:943.7px;font-size:12.5px;color:#9a9a9a;">B</div>
<div class="btn" style="left:687px;top:938.3px;width:22.5px;height:20px;background:#f6f6f6;border-color:#e6e6e6;"></div>
<div class="t" style="left:689.8px;top:943.7px;font-size:12.5px;letter-spacing:-0.35px;color:#9a9a9a;">Ext</div>
<div class="t" style="left:543.5px;top:965.4px;font-size:12.5px;letter-spacing:-0.06px;">Level:</div>
<div class="sunk" style="left:594.5px;top:963.5px;width:82.5px;height:22.5px;background:#fff"></div>
<div class="t" style="left:600.8px;top:968.4px;font-size:12.5px;">0</div>
<div class="sunk" style="left:678.5px;top:963.5px;width:31.5px;height:22.5px;background:#fff"></div>
<div class="t" style="left:687.3px;top:967.4px;font-size:12.5px;">V</div>
<div class="btn" style="left:544.5px;top:988.7px;width:43px;height:20.5px;"></div>
<div class="t" style="left:549.8px;top:993.2px;font-size:12.5px;letter-spacing:-0.37px;">Single</div>
<div class="btn" style="left:590.3px;top:988.7px;width:48px;height:20.5px;"></div>
<div class="t" style="left:594.3px;top:993.2px;font-size:12.5px;letter-spacing:-0.05px;">Normal</div>
<div class="btn" style="left:641.4px;top:988.7px;width:32px;height:20.5px;"></div>
<div class="t" style="left:644.4px;top:993.2px;font-size:12.5px;letter-spacing:0.07px;">Auto</div>
<div class="btn on" style="left:676.2px;top:988.7px;width:37.5px;height:21px;"></div>
<div class="t" style="left:680.7px;top:993.2px;font-size:12.5px;letter-spacing:-0.35px;">None</div>
<svg class="a" style="left:711px;top:1002px" width="12" height="12" viewBox="0 0 12 12"><g fill="#9c9c9c"><rect x="8" y="0" width="2" height="2"/><rect x="4" y="4" width="2" height="2"/><rect x="8" y="4" width="2" height="2"/><rect x="0" y="8" width="2" height="2"/><rect x="4" y="8" width="2" height="2"/><rect x="8" y="8" width="2" height="2"/></g></svg>
<div class="win ina" style="left:635px;top:407px;width:208px;height:205px"><div class="wint" style="height:39px"></div></div>
<div class="t" style="left:644.5px;top:418.4px;font-size:15px;letter-spacing:0.20px;color:#a0a0a0;">Multimeter-XMM2</div>
<svg class="a" style="left:815px;top:418px" width="15" height="15" viewBox="0 0 15 15"><path d="M1.500 1.500l11.500 11.500M13 1.500L1.500 13" stroke="#8a8a8a" stroke-width="1.100"/></svg>
<div class="a" style="left:637.500px;top:446.500px;width:203.500px;height:35px;background:#000;border:2px solid;border-color:#6a6a6a #f4f4f4 #f4f4f4 #6a6a6a"></div>
<div class="t" style="left:711.2px;top:450.7px;font-size:15.5px;letter-spacing:0.08px;color:#fff;">3.535 V</div>
<div class="a" style="left:635px;top:483px;width:208px;height:1px;background:#9a9a9a;"></div>
<div class="grp" style="left:642px;top:494px;width:194px;height:35px"></div>
<div class="grp" style="left:671px;top:528px;width:133px;height:31px"></div>
<div class="btn" style="left:657.3px;top:499.5px;width:32.2px;height:23px;"></div>
<div class="t" style="left:669.2px;top:505.5px;font-size:12.5px;">A</div>
<div class="btn on" style="left:700.2px;top:499.5px;width:32.7px;height:23px;"></div>
<div class="t" style="left:712.4px;top:505.5px;font-size:12.5px;">V</div>
<div class="btn" style="left:744.3px;top:499.5px;width:32.5px;height:23px;"></div>
<div class="t" style="left:755.9px;top:505.5px;font-size:12.5px;">Ω</div>
<div class="btn" style="left:788.2px;top:499.5px;width:32.5px;height:23px;"></div>
<div class="t" style="left:796.7px;top:505.5px;font-size:12.5px;letter-spacing:0.10px;">dB</div>
<div class="btn on" style="left:683px;top:535.3px;width:48.6px;height:17.5px;"></div>
<div class="btn" style="left:746px;top:535.3px;width:46.6px;height:17.5px;"></div>
<svg class="a" style="left:690px;top:536px" width="100" height="16" viewBox="690 536 100 16"><path d="M695.800 544.500C699 540 703 539.500 706 543S712 548.500 718 542.500" stroke="#000" stroke-width="1.400" fill="none"/><path d="M757.600 543.300H780" stroke="#000" stroke-width="1.600"/></svg>
<div class="t" style="left:647.7px;top:570.7px;font-size:12.5px;">+</div>
<div class="a" style="left:826px;top:580.2px;width:7.5px;height:1.3px;background:#000;"></div>
<div class="a" style="left:643px;top:586px;width:16px;height:16px;border-radius:50%;background:#fff;border:4.500px solid #bdbdbd"></div>
<div class="a" style="left:817.8px;top:587.8px;width:16px;height:16px;border-radius:50%;background:#fff;border:4.500px solid #bdbdbd"></div>
<div class="btn" style="left:699.4px;top:573.6px;width:81.2px;height:21px;"></div>
<div class="t" style="left:725.0px;top:578.8px;font-size:12.5px;letter-spacing:0.14px;">Set...</div>
<svg class="a" style="left:831px;top:600px" width="12" height="12" viewBox="0 0 12 12"><g fill="#9c9c9c"><rect x="8" y="0" width="2" height="2"/><rect x="4" y="4" width="2" height="2"/><rect x="8" y="4" width="2" height="2"/><rect x="0" y="8" width="2" height="2"/><rect x="4" y="8" width="2" height="2"/><rect x="8" y="8" width="2" height="2"/></g></svg>
<div class="a" style="left:650.500px;top:92.500px;width:116.500px;height:24px;background:#f9f9f9;border:1px solid #dedede;border-radius:4px;box-shadow:0 4px 9px rgba(0,0,0,.32)"></div>
<div class="t" style="left:657.0px;top:97.0px;font-size:15px;letter-spacing:-0.50px;color:#5a5a5a;">Find examples...</div>
</body></html>
